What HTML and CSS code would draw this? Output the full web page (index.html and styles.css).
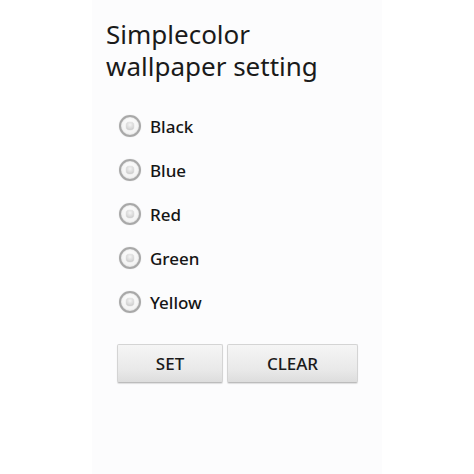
FILE: index.html
```html
<!DOCTYPE html>
<html>
<head>
<meta charset="utf-8">
<link rel="stylesheet" href="styles.css">
</head>
<body>
<div class="screen">
  <h1 class="title"><span class="title-line">Simplecolor</span><span class="title-line">wallpaper setting</span></h1>
  <div class="radios">
    <label class="row"><span class="radio"><span class="dot"></span></span><span class="label">Black</span></label>
    <label class="row"><span class="radio"><span class="dot"></span></span><span class="label">Blue</span></label>
    <label class="row"><span class="radio"><span class="dot"></span></span><span class="label">Red</span></label>
    <label class="row"><span class="radio"><span class="dot"></span></span><span class="label">Green</span></label>
    <label class="row"><span class="radio"><span class="dot"></span></span><span class="label">Yellow</span></label>
  </div>
  <div class="buttons">
    <button class="btn btn-set">SET</button>
    <button class="btn btn-clear">CLEAR</button>
  </div>
</div>
</body>
</html>
```
FILE: styles.css
```css
html, body {
  margin: 0;
  padding: 0;
  background: #ffffff;
  width: 474px;
  height: 474px;
  overflow: hidden;
}
.screen {
  margin-left: 92px;
  width: 290px;
  height: 474px;
  background: #fcfcfd;
  padding: 18px 0 0 14px;
  box-sizing: border-box;
  font-family: "Noto Sans", "Open Sans", sans-serif;
  color: #1a1a1a;
}
.title {
  margin: 0;
  font-weight: 400;
  font-size: 26px;
  line-height: 32px;
  color: #1a1a1a;
  display: flex;
  flex-direction: column;
}
.title-line {
  display: block;
  height: 32px;
}
.radios {
  display: flex;
  flex-direction: column;
  margin-top: 22px;
  padding-left: 13px;
}
.row {
  display: flex;
  align-items: center;
  height: 44px;
}
.radio {
  width: 18px;
  height: 18px;
  border-radius: 50%;
  border: 2px solid #a8a8a8;
  background: radial-gradient(circle at 50% 40%, #ffffff 0%, #f4f4f4 60%, #e4e4e4 100%);
  display: flex;
  align-items: center;
  justify-content: center;
  box-shadow: inset 0 0 1px #bbb, 0 0 1px #ccc;
}
.dot {
  width: 8px;
  height: 8px;
  border-radius: 50%;
  background: radial-gradient(circle at 50% 35%, #f4f4f4 0%, #d6d6d6 60%, #bcbcbc 100%);
  box-shadow: 0 0 1px #aaa;
}
.label {
  margin-left: 9px;
  font-size: 17px;
  font-weight: 500;
  color: #151515;
}
.buttons {
  display: flex;
  gap: 4px;
  margin-top: 20px;
  padding-left: 11px;
}
.btn {
  height: 39px;
  border: 1px solid #d4d4d4;
  border-bottom-color: #bcbcbc;
  border-radius: 2px;
  background: linear-gradient(#f5f5f5, #e8e8e8 70%, #dddddd);
  box-shadow: 0 1px 1px rgba(0,0,0,0.12);
  font-family: "Noto Sans", "Open Sans", sans-serif;
  font-size: 17px;
  font-weight: 500;
  color: #1a1a1a;
  padding: 0;
}
.btn-set { width: 106px; }
.btn-clear { width: 131px; }
```
